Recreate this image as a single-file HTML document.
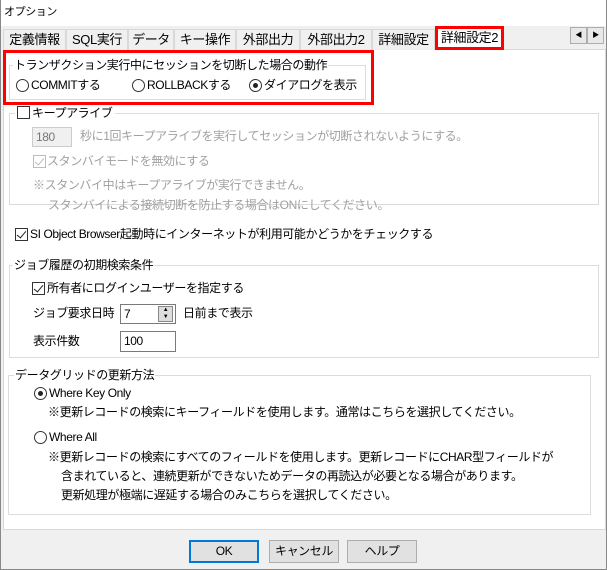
<!DOCTYPE html>
<html><head><meta charset="utf-8"><style>
*{margin:0;padding:0;box-sizing:border-box}
body{width:607px;height:570px;background:#f0f0f0;font-family:"Liberation Sans","Noto Sans CJK JP",sans-serif;font-size:12px;letter-spacing:-0.4px;color:#000;position:relative;overflow:hidden}
.a{position:absolute;white-space:nowrap;line-height:14px}
.g{color:#a0a0a0}
.fr{position:absolute;border:1px solid #dcdcdc}
.lg{position:absolute;background:#fff;padding:0 1px;line-height:14px;white-space:nowrap}
.cb{position:absolute;width:13px;height:13px;border:1px solid #333;background:#fff}
.cb.c::after{content:"";position:absolute;left:3px;top:0px;width:4px;height:8px;border:solid #222;border-width:0 1.5px 1.5px 0;transform:rotate(40deg)}
.cb.d{border-color:#bcbcbc}.cb.d::after{border-color:#bcbcbc}
.rb{position:absolute;width:13px;height:13px;border:1px solid #333;border-radius:50%;background:#fff}
.rb.c::after{content:"";position:absolute;left:3px;top:3px;width:5px;height:5px;border-radius:50%;background:#222}
.tab{position:absolute;top:29px;height:21px;border:1px solid #d9d9d9;border-bottom:none;background:#f0f0f0;font-size:13px;line-height:20px;text-align:center;white-space:nowrap}
.box{position:absolute;background:#fff;border:1px solid #7a7a7a;padding-left:3px;line-height:18px}
.btn{position:absolute;top:540px;height:23px;background:#e1e1e1;border:1px solid #adadad;text-align:center;line-height:21px}
</style></head><body>
<div style="position:absolute;left:0;top:0;width:607px;height:26px;background:#fff"></div>
<div class="a" style="left:4px;top:5px;font-size:11px">オプション</div>
<div style="position:absolute;left:0;top:0;width:1px;height:570px;background:#888"></div>
<div style="position:absolute;left:606px;top:0;width:1px;height:570px;background:#888"></div>
<div style="position:absolute;left:0;top:569px;width:607px;height:1px;background:#888"></div>
<div style="position:absolute;left:3px;top:49px;width:603px;height:481px;background:#fff;border:1px solid #d9d9d9"></div>
<div class="tab" style="left:3px;width:63px">定義情報</div>
<div class="tab" style="left:66px;width:62px">SQL実行</div>
<div class="tab" style="left:128px;width:46px">データ</div>
<div class="tab" style="left:174px;width:62px">キー操作</div>
<div class="tab" style="left:236px;width:64px">外部出力</div>
<div class="tab" style="left:300px;width:72px">外部出力2</div>
<div class="tab" style="left:372px;width:63px">詳細設定</div>
<div class="tab" style="left:435px;top:26px;width:69px;height:24px;background:#fff;border:3px solid #f00;line-height:18px">詳細設定2</div>
<div style="position:absolute;left:570px;top:27px;width:17px;height:17px;border:1px solid #adadad;background:#e8e8e8;font-size:7px;text-align:center;line-height:15px">◀</div>
<div style="position:absolute;left:587px;top:27px;width:17px;height:17px;border:1px solid #adadad;background:#e8e8e8;font-size:7px;text-align:center;line-height:15px">▶</div>
<div style="position:absolute;left:3px;top:50px;width:371px;height:55px;border:3px solid #f00"></div>
<div class="fr" style="left:9px;top:65px;width:357px;height:35px"></div>
<div class="lg" style="left:13px;top:58px">トランザクション実行中にセッションを切断した場合の動作</div>
<div class="rb" style="left:16px;top:79px"></div><div class="a" style="left:31px;top:78px">COMMITする</div>
<div class="rb" style="left:132px;top:79px"></div><div class="a" style="left:147px;top:78px">ROLLBACKする</div>
<div class="rb c" style="left:249px;top:79px"></div><div class="a" style="left:264px;top:78px">ダイアログを表示</div>
<div class="fr" style="left:9px;top:113px;width:590px;height:92px"></div>
<div class="lg" style="left:15px;top:106px;padding-right:3px"><span style="display:inline-block;width:16px"></span>キープアライブ</div>
<div class="cb" style="left:17px;top:106px"></div>
<div class="box" style="left:32px;top:127px;width:40px;height:20px;border-color:#ccc;background:#f0f0f0;color:#777">180</div>
<div class="a g" style="left:80px;top:129px">秒に1回キープアライブを実行してセッションが切断されないようにする。</div>
<div class="cb c d" style="left:33px;top:155px"></div>
<div class="a g" style="left:47px;top:154px">スタンバイモードを無効にする</div>
<div class="a g" style="left:33px;top:178px">※スタンバイ中はキープアライブが実行できません。</div>
<div class="a g" style="left:48px;top:198px">スタンバイによる接続切断を防止する場合はONにしてください。</div>
<div class="cb c" style="left:15px;top:228px"></div>
<div class="a" style="left:30px;top:227px">SI Object Browser起動時にインターネットが利用可能かどうかをチェックする</div>
<div class="fr" style="left:9px;top:265px;width:590px;height:93px"></div>
<div class="lg" style="left:13px;top:258px">ジョブ履歴の初期検索条件</div>
<div class="cb c" style="left:32px;top:282px"></div>
<div class="a" style="left:47px;top:281px">所有者にログインユーザーを指定する</div>
<div class="a" style="left:33px;top:306px">ジョブ要求日時</div>
<div class="box" style="left:120px;top:304px;width:56px;height:20px">7</div>
<div style="position:absolute;left:158px;top:306px;width:15px;height:16px;background:#ddd;border:1px solid #888;font-size:6px;line-height:7px;text-align:center">▲<br>▼</div>
<div class="a" style="left:183px;top:306px">日前まで表示</div>
<div class="a" style="left:33px;top:334px">表示件数</div>
<div class="box" style="left:120px;top:331px;width:56px;height:21px">100</div>
<div class="fr" style="left:8px;top:375px;width:583px;height:140px"></div>
<div class="lg" style="left:14px;top:368px">データグリッドの更新方法</div>
<div class="rb c" style="left:34px;top:387px"></div><div class="a" style="left:49px;top:386px">Where Key Only</div>
<div class="a" style="left:48px;top:405px">※更新レコードの検索にキーフィールドを使用します。通常はこちらを選択してください。</div>
<div class="rb" style="left:34px;top:431px"></div><div class="a" style="left:49px;top:430px">Where All</div>
<div class="a" style="left:48px;top:450px">※更新レコードの検索にすべてのフィールドを使用します。更新レコードにCHAR型フィールドが</div>
<div class="a" style="left:61px;top:469px">含まれていると、連続更新ができないためデータの再読込が必要となる場合があります。</div>
<div class="a" style="left:61px;top:488px">更新処理が極端に遅延する場合のみこちらを選択してください。</div>
<div class="btn" style="left:189px;width:70px;border:2px solid #0078d7;line-height:19px">OK</div>
<div class="btn" style="left:269px;width:70px">キャンセル</div>
<div class="btn" style="left:347px;width:70px">ヘルプ</div>
</body></html>
